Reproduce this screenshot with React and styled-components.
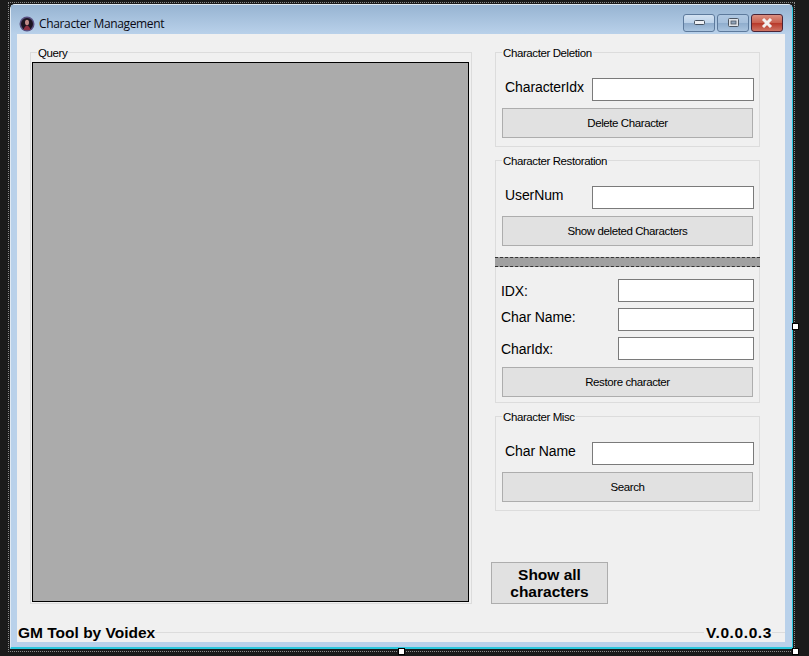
import React from "react";
import styled, { createGlobalStyle } from "styled-components";

const Global = createGlobalStyle`
  html, body { margin: 0; padding: 0; background: #1b1b1b; height: 100%; overflow: hidden; }
  #root { width: 809px; height: 656px; }
`;
const Stage = styled.div`
  width: 809px; height: 656px; background: #1b1b1b; box-sizing: border-box; padding: 2px 0 0 8px;
`;
const Designer = styled.div`
  position: relative; box-sizing: border-box; width: 787px; height: 650px;
  border: 1px dotted #8a8a8a; padding: 1px 0 0 1px;
`;
const Handle = styled.span`
  position: absolute; width: 5px; height: 5px; background: #fff; border: 1px solid #000;
  left: ${p => p.$x}px; top: ${p => p.$y}px;
`;
const Win = styled.div`
  box-sizing: border-box; width: 783px; height: 645px; display: flex; flex-direction: column;
  background: #b9d1ea; border-right: 1px solid #2ac7dc; border-bottom: 2px solid #2ac7dc;
  border-top: 1px solid #dfe9f3; border-left: 1px solid #dfe9f3; border-top-left-radius: 5px; border-top-right-radius: 5px;
`;
const TitleBar = styled.div`
  height: 29px; box-sizing: border-box; flex: none; display: flex; align-items: center; padding: 8px 7px 0 8px;
  background: linear-gradient(#97b4d2, #b9d1ea);
`;
const TitleText = styled.span`
  font: 12px "Open Sans", sans-serif; color: #0a0a14; margin-left: 4px; letter-spacing: -0.35px; flex: 1;
`;
const Caption = styled.div`display: flex; gap: 2px; margin-top: -2px; margin-right: 2px;`;
const CapBtn = styled.div`
  width: 32px; height: 18px; box-sizing: border-box; border-radius: 3px;
  display: flex; align-items: center; justify-content: center;
  border: 1px solid ${p => p.$close ? "#4a2436" : "#5d7a9c"};
  background: ${p => p.$close
    ? "linear-gradient(#dc8f80 0%, #c8604f 48%, #b8392a 52%, #cf7464 100%)"
    : p.$dim ? "linear-gradient(#b0c8e2 0%, #a5bfdb 48%, #8fadcd 52%, #a9c3de 100%)"
    : "linear-gradient(#d3e2f2 0%, #bcd2e9 48%, #8eabcb 52%, #aac5e0 100%)"};
`;
const Client = styled.div`
  flex: 1; margin: 0 7px 6px 6px; background: #f0f0f0; display: flex; flex-direction: column;
`;
const Main = styled.div`display: flex; padding: 18px 0 0 13px; height: 552px;`;
const Group = styled.div`
  position: relative; box-sizing: border-box; border: 1px solid #dcdcdc;
  width: ${p => p.$w}px;
`;
const Legend = styled.span`
  position: absolute; top: -6px; left: 6px; padding: 0 1px; background: #f0f0f0;
  font: 11.5px/13px "Liberation Sans", sans-serif; color: #000; letter-spacing: -0.4px;
`;
const ListBox = styled.div`
  box-sizing: border-box; margin: 9px 2px 1px 1px; height: 540px; width: 437px;
  background: #ababab; border: 1px solid #000;
`;
const Side = styled.div`display: flex; flex-direction: column; margin-left: 23px; width: 265px;`;
const SideGroup = styled(Group)`
  margin-bottom: 13px; padding: 25px 6px ${p => p.$pb ?? 8}px 6px; display: flex; flex-direction: column; gap: 7px;
`;
const Row = styled.div`display: flex; align-items: center; justify-content: space-between; padding-left: 3px;`;
const Field = styled.label`
  font: 14px "Liberation Sans", sans-serif; color: #000; letter-spacing: -0.1px;
  margin-bottom: ${p => p.$up || 0}px;
`;
const Input = styled.div`
  box-sizing: border-box; background: #fff; border: 1px solid #7a7a7a; height: 23px;
  width: ${p => p.$w || 162}px; margin-right: -1px;
`;
const Button = styled.div`
  box-sizing: border-box; background: #e1e1e1; border: 1px solid #adadad; height: 30px; width: 251px;
  display: flex; align-items: center; justify-content: center;
  font: 11.5px "Liberation Sans", sans-serif; color: #000; letter-spacing: -0.4px;
`;
const Stripe = styled.div`
  box-sizing: border-box; height: 10px; margin: 4px -7px 5px; background: #a0a0a0;
  border-top: 1px dashed #333; border-bottom: 1px dashed #333;
`;
const Detail = styled.div`display: flex; flex-direction: column; gap: 6px;`;
const DetailRow = styled(Row)`padding-left: 0; margin-left: -1px;`;
const BigButton = styled.div`
  box-sizing: border-box; width: 117px; height: 43px; margin: 38px 0 0 -4px;
  background: #e1e1e1; border: 1px solid #adadad; display: flex; align-items: center; justify-content: center;
  text-align: center; font: bold 15.5px/17px "Liberation Sans", sans-serif; color: #000;
`;
const Footer = styled.div`
  margin-top: 20px; display: flex; align-items: center; font: bold 15.5px/18px "Liberation Sans", sans-serif; color: #000;
  padding: 0 0 0 1px;
`;
const Rule = styled.div`flex: ${p => p.$fixed ? `0 0 ${p.$fixed}px` : 1}; height: 1px; background: #dcdcdc; margin-top: -2px;`;
const Version = styled.span`letter-spacing: 0.6px; margin-left: 2px;`;

const Avatar = () => (
  <svg width="16" height="16" viewBox="0 0 16 16">
    <circle cx="8" cy="8" r="7.500" fill="#5a5080" />
    <circle cx="8" cy="8" r="6" fill="#1c1420" />
    <ellipse cx="8" cy="6.500" rx="2" ry="2.800" fill="#c08a88" />
    <path d="M4.500 14c.5-3 2.500-4.500 3.500-4.500s3 1.500 3.500 4.500z" fill="#8c2f42" />
  </svg>
);

export default function App() {
  return (
    <Stage>
      <Global />
      <Designer>
        <Win>
          <TitleBar>
            <Avatar />
            <TitleText>Character Management</TitleText>
            <Caption>
              <CapBtn>
                <svg width="11" height="5"><rect x=".5" y=".5" width="10" height="4" rx="1" fill="#eef0f4" stroke="#44505f" /></svg>
              </CapBtn>
              <CapBtn $dim>
                <svg width="11" height="9"><rect x=".5" y=".5" width="10" height="8" rx="1" fill="#dfe3e8" stroke="#4c5663" /><rect x="3" y="3" width="5" height="3" fill="#8fa3ba" stroke="#4c5663" strokeWidth=".8" /></svg>
              </CapBtn>
              <CapBtn $close>
                <svg width="12" height="10" viewBox="0 0 12 10"><path d="M2 1l8 8M10 1L2 9" fill="none" stroke="#f3f0f0" strokeWidth="3" /></svg>
              </CapBtn>
            </Caption>
          </TitleBar>
          <Client>
            <Main>
              <Group $w={442}>
                <Legend>Query</Legend>
                <ListBox />
              </Group>
              <Side>
                <SideGroup $w={265}>
                  <Legend>Character Deletion</Legend>
                  <Row><Field $up={5}>CharacterIdx</Field><Input /></Row>
                  <Button>Delete Character</Button>
                </SideGroup>
                <SideGroup $w={265} $pb={5}>
                  <Legend>Character Restoration</Legend>
                  <Row><Field $up={6}>UserNum</Field><Input /></Row>
                  <Button>Show deleted Characters</Button>
                  <Stripe />
                  <Detail>
                    <DetailRow><Field>IDX:</Field><Input $w={136} /></DetailRow>
                    <DetailRow><Field $up={6}>Char Name:</Field><Input $w={136} /></DetailRow>
                    <DetailRow><Field>CharIdx:</Field><Input $w={136} /></DetailRow>
                  </Detail>
                  <Button>Restore character</Button>
                </SideGroup>
                <SideGroup $w={265}>
                  <Legend>Character Misc</Legend>
                  <Row><Field $up={5}>Char Name</Field><Input /></Row>
                  <Button>Search</Button>
                </SideGroup>
                <BigButton>Show all<br />characters</BigButton>
              </Side>
            </Main>
            <Footer>
              <span>GM Tool by Voidex</span>
              <Rule />
              <Version>V.0.0.0.3</Version>
              <Rule $fixed={13} />
            </Footer>
          </Client>
        </Win>
        <Handle $x={783} $y={320} />
        <Handle $x={389} $y={645} />
        <Handle $x={783} $y={645} />
      </Designer>
    </Stage>
  );
}
